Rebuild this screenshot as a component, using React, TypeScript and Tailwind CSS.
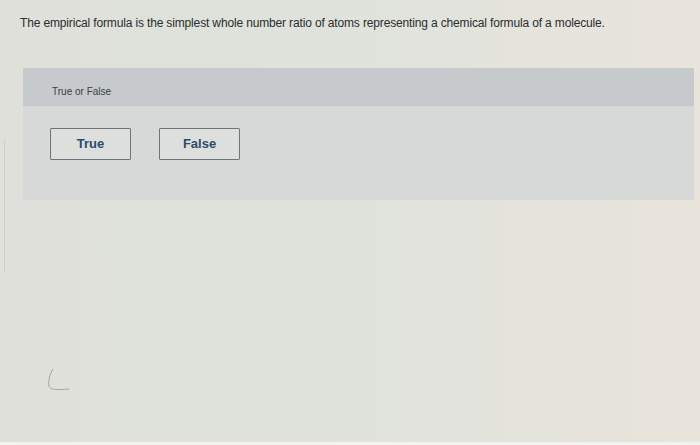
import React, { useState } from 'react'

type Answer = 'True' | 'False' | null;

const QUESTION = 'The empirical formula is the simplest whole number ratio of atoms representing a chemical formula of a molecule.';

export default function App() {
  const [answer, setAnswer] = useState<Answer>(null);

  return (
    <div className="relative w-[700px] h-[445px] overflow-hidden bg-gradient-to-r from-[#dfe0da] via-[#dfe3dc] to-[#e9e4dc] font-['Liberation_Sans',Arial,sans-serif]">
      <div className="pl-[20px] pt-[16px] text-[12px] leading-[14px] tracking-[-0.15px] text-[#2a2c2e]">
        {QUESTION}
      </div>

      <div className="ml-[23px] mt-[38px] w-[671px] bg-[#d6d9d7]">
        <div className="h-[38px] bg-[#c6cacc] pl-[29px] pt-[19px] text-[10px] leading-[10px] text-[#3a3e42]">
          True or False
        </div>
        <div className="flex gap-[28px] pl-[27px] pt-[22px] pb-[40px]">
          <Choice label="True" selected={answer === 'True'} onClick={() => setAnswer('True')} />
          <Choice label="False" selected={answer === 'False'} onClick={() => setAnswer('False')} />
        </div>
      </div>

      {/* pen mark on the glass */}
      <svg className="absolute left-[44px] top-[366px]" width="30" height="28" viewBox="0 0 30 28">
        <path d="M9 3 C6 8 4 14 5 20 C6 24 12 24 25 23" fill="none" stroke="#a3a6a0" strokeWidth="1" />
      </svg>
      <div className="absolute left-0 top-[140px] h-[132px] w-[5px] border-r border-[#cfd0ca]" />
      <div className="absolute left-0 bottom-0 h-[3px] w-full bg-[#f2f2ee]" />
    </div>
  )
}

function Choice({ label, selected, onClick }: { label: string, selected: boolean, onClick: () => void }) {
  return (
    <button
      onClick={onClick}
      className={"w-[81px] h-[32px] border rounded-[1px] text-[13px] font-bold text-[#2d4a6b] " + (selected ? "border-[#2d4a6b] bg-[#cfd8e0]" : "border-[#6e7479] bg-[#dcdfdc]")}
    >
      {label}
    </button>
  )
}
